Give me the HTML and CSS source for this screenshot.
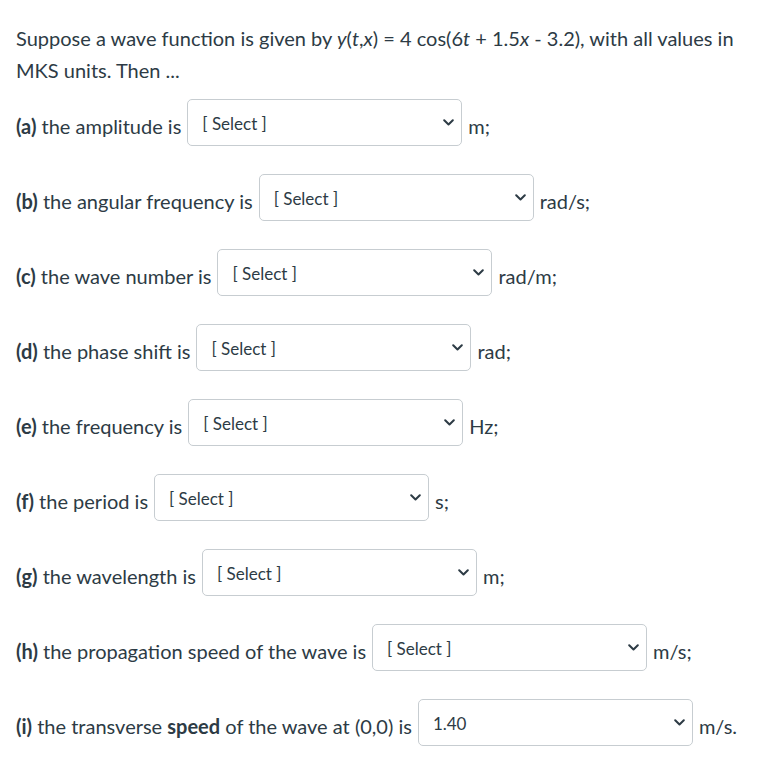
FILE: index.html
```html
<!DOCTYPE html>
<html>
<head>
<meta charset="utf-8">
<link rel="stylesheet" href="styles.css">
</head>
<body>
<div class="question">
  <p class="intro">Suppose a wave function is given by <i>y</i>(<i>t</i>,<i>x</i>) = 4 cos(6<i>t</i> + 1.5<i>x</i> - 3.2), with all values in MKS units. Then ...</p>
  <div class="rows">
    <div class="row"><span class="lbl"><b>(a)</b> the amplitude is</span><div class="sel"><span class="val">[ Select ]</span><svg class="chev" width="11" height="7" viewBox="0 0 11 7"><path d="M1.2 1.2l4.3 4.3 4.3-4.3" /></svg></div><span class="unit">m;</span></div>
    <div class="row"><span class="lbl"><b>(b)</b> the angular frequency is</span><div class="sel"><span class="val">[ Select ]</span><svg class="chev" width="11" height="7" viewBox="0 0 11 7"><path d="M1.2 1.2l4.3 4.3 4.3-4.3" /></svg></div><span class="unit">rad/s;</span></div>
    <div class="row"><span class="lbl"><b>(c)</b> the wave number is</span><div class="sel"><span class="val">[ Select ]</span><svg class="chev" width="11" height="7" viewBox="0 0 11 7"><path d="M1.2 1.2l4.3 4.3 4.3-4.3" /></svg></div><span class="unit">rad/m;</span></div>
    <div class="row"><span class="lbl"><b>(d)</b> the phase shift is</span><div class="sel"><span class="val">[ Select ]</span><svg class="chev" width="11" height="7" viewBox="0 0 11 7"><path d="M1.2 1.2l4.3 4.3 4.3-4.3" /></svg></div><span class="unit">rad;</span></div>
    <div class="row"><span class="lbl"><b>(e)</b> the frequency is</span><div class="sel"><span class="val">[ Select ]</span><svg class="chev" width="11" height="7" viewBox="0 0 11 7"><path d="M1.2 1.2l4.3 4.3 4.3-4.3" /></svg></div><span class="unit">Hz;</span></div>
    <div class="row"><span class="lbl"><b>(f)</b> the period is</span><div class="sel"><span class="val">[ Select ]</span><svg class="chev" width="11" height="7" viewBox="0 0 11 7"><path d="M1.2 1.2l4.3 4.3 4.3-4.3" /></svg></div><span class="unit">s;</span></div>
    <div class="row"><span class="lbl"><b>(g)</b> the wavelength is</span><div class="sel"><span class="val">[ Select ]</span><svg class="chev" width="11" height="7" viewBox="0 0 11 7"><path d="M1.2 1.2l4.3 4.3 4.3-4.3" /></svg></div><span class="unit">m;</span></div>
    <div class="row"><span class="lbl"><b>(h)</b> the propagation speed of the wave is</span><div class="sel"><span class="val">[ Select ]</span><svg class="chev" width="11" height="7" viewBox="0 0 11 7"><path d="M1.2 1.2l4.3 4.3 4.3-4.3" /></svg></div><span class="unit">m/s;</span></div>
    <div class="row"><span class="lbl"><b>(i)</b> the transverse <b>speed</b> of the wave at (0,0) is</span><div class="sel"><span class="val">1.40</span><svg class="chev" width="11" height="7" viewBox="0 0 11 7"><path d="M1.2 1.2l4.3 4.3 4.3-4.3" /></svg></div><span class="unit">m/s.</span></div>
  </div>
</div>
</body>
</html>
```
FILE: styles.css
```css
html, body {
  margin: 0;
  background: #ffffff;
}
body {
  font-family: Lato, "Noto Sans", sans-serif;
  font-size: 20px;
  color: #2d3b45;
}
.question {
  padding: 22px 15px 0 16px;
}
.intro {
  margin: 0;
  line-height: 32px;
}
.rows {
  margin-top: 13px;
  display: flex;
  flex-direction: column;
  gap: 28px;
}
.row {
  display: flex;
  align-items: center;
  gap: 6px;
  height: 47px;
}
.lbl, .unit {
  line-height: 27px;
  padding-top: 8px;
  white-space: nowrap;
}
.sel {
  box-sizing: border-box;
  width: 275px;
  height: 47px;
  border: 1px solid #c7cdd1;
  border-radius: 5px;
  display: flex;
  align-items: center;
  justify-content: space-between;
  padding: 0 7px 0 14px;
}
.val {
  font-size: 17px;
  padding-top: 1px;
}
.chev {
  display: block;
}
.chev path {
  fill: none;
  stroke: #2d3b45;
  stroke-width: 2;
  stroke-linecap: round;
  stroke-linejoin: round;
}
```
